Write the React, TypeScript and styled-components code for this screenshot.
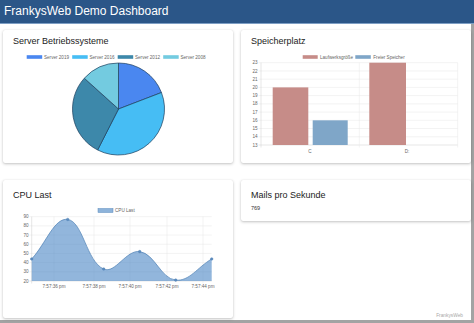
import styled, { createGlobalStyle } from "styled-components";

const GlobalStyle = createGlobalStyle`
  html, body {
    margin: 0;
    padding: 0;
    background: #fff;
  }
  body {
    font-family: "Liberation Sans", Arial, sans-serif;
  }
`;

const Page = styled.div`
  width: 474px;
  height: 323px;
  display: flex;
  flex-direction: column;
  overflow: hidden;
`;

const Header = styled.header`
  height: 23px;
  flex: none;
  background: #2b5688;
  border-bottom: 1px solid #7d9ec4;
  color: #fff;
  font-size: 12px;
  line-height: 23px;
  padding-left: 4px;
`;

const Main = styled.main`
  position: relative;
  flex: 1;
  box-sizing: border-box;
  border-right: 3px solid #a3a3a3;
  border-bottom: 3px solid #a3a3a3;
  padding: 6px 0 0 3px;
`;

const Grid = styled.div`
  display: grid;
  grid-template-columns: 230px 230px;
  grid-template-rows: 133px auto;
  column-gap: 8px;
  row-gap: 17px;
  align-items: start;
`;

const Card = styled.section<{ $top: number; $height?: number }>`
  box-sizing: border-box;
  background: #fff;
  border-radius: 2px;
  box-shadow: 0 1px 3px rgba(0, 0, 0, 0.24), 0 0 1px rgba(0, 0, 0, 0.1);
  padding-top: ${(p) => p.$top}px;
  height: ${(p) => (p.$height ? `${p.$height}px` : "auto")};
`;

const Title = styled.h2`
  margin: 0;
  padding: 0 10px;
  font-size: 9px;
  line-height: 11px;
  font-weight: normal;
  color: #222;
`;

const Value = styled.div`
  padding: 3px 10px 9px;
  font-size: 5.5px;
  line-height: 8px;
  color: #333;
`;

const Chart = styled.svg`
  display: block;
  font-family: "Liberation Sans", Arial, sans-serif;
`;

const Footer = styled.div`
  position: absolute;
  right: 8px;
  bottom: 1px;
  font-size: 4.8px;
  line-height: 6px;
  color: #a8a8a8;
`;

const TXT = "#666";
const GRID = "#e6e6e6";

const pieSlices = [
  { label: "Server 2019", color: "#4a87f0", from: 0, to: 69 },
  { label: "Server 2016", color: "#46bdf4", from: 69, to: 207 },
  { label: "Server 2012", color: "#3d88aa", from: 207, to: 312 },
  { label: "Server 2008", color: "#73cbe0", from: 312, to: 360 },
];

const slicePath = (cx: number, cy: number, r: number, a0: number, a1: number) => {
  const pt = (a: number) => {
    const rad = (a * Math.PI) / 180;
    return `${(cx + r * Math.sin(rad)).toFixed(2)} ${(cy - r * Math.cos(rad)).toFixed(2)}`;
  };
  const large = a1 - a0 > 180 ? 1 : 0;
  return `M ${cx} ${cy} L ${pt(a0)} A ${r} ${r} 0 ${large} 1 ${pt(a1)} Z`;
};

const PieChart = () => (
  <Chart width={230} height={116} viewBox="0 0 230 116">
    {pieSlices.map((s, i) => {
      const bx = 23.7 + i * 45.5;
      return (
        <g key={s.label}>
          <rect x={bx} y={8.2} width={15.5} height={3.6} fill={s.color} />
          <text x={bx + 17.3} y={11.5} fontSize={4.6} fill={TXT}>
            {s.label}
          </text>
        </g>
      );
    })}
    {pieSlices.map((s) => (
      <path
        key={s.label}
        d={slicePath(115.5, 62, 46, s.from, s.to)}
        fill={s.color}
        stroke="#1d3d5c"
        strokeWidth={0.7}
      />
    ))}
  </Chart>
);

const RED = "#c68c88";
const BLUE = "#7fa6c8";

const BarChart = () => {
  const top = 15.7;
  const step = 8.23;
  const y = (v: number) => top + (23 - v) * step;
  const ticks = [23, 22, 21, 20, 19, 18, 17, 16, 15, 14, 13];
  return (
    <Chart width={230} height={116} viewBox="0 0 230 116">
      <rect x={61.7} y={8.2} width={15} height={3.6} fill={RED} />
      <text x={79} y={11.5} fontSize={4.6} fill={TXT}>
        Laufwerksgröße
      </text>
      <rect x={114.3} y={8.2} width={15.5} height={3.6} fill={BLUE} />
      <text x={132.3} y={11.5} fontSize={4.6} fill={TXT}>
        Freier Speicher
      </text>
      {ticks.map((t) => (
        <g key={t}>
          <line x1={17.5} x2={216.7} y1={y(t)} y2={y(t)} stroke={t === 13 ? "#cfcfcf" : GRID} strokeWidth={0.5} />
          <text x={16.5} y={y(t) + 1.6} fontSize={4.6} fill={TXT} textAnchor="end">
            {t}
          </text>
        </g>
      ))}
      {[20, 118.3, 216.7].map((x) => (
        <line key={x} x1={x} x2={x} y1={top} y2={y(13) + 2.5} stroke={x === 20 ? "#cfcfcf" : GRID} strokeWidth={0.5} />
      ))}
      <rect x={31.7} y={y(20)} width={35.6} height={y(13) - y(20)} fill={RED} />
      <rect x={71.7} y={y(16)} width={35} height={y(13) - y(16)} fill={BLUE} />
      <rect x={128.3} y={y(23)} width={36.7} height={y(13) - y(23)} fill={RED} />
      <text x={69} y={105.6} fontSize={4.6} fill={TXT} textAnchor="middle">
        C
      </text>
      <text x={166} y={105.6} fontSize={4.6} fill={TXT} textAnchor="middle">
        D:
      </text>
    </Chart>
  );
};

type Pt = { x: number; y: number };

const curvePath = (pts: Pt[], tension: number) => {
  const cps = pts.map((cur, i) => {
    const prev = pts[i - 1] ?? cur;
    const next = pts[i + 1] ?? cur;
    const d01 = Math.hypot(cur.x - prev.x, cur.y - prev.y);
    const d12 = Math.hypot(next.x - cur.x, next.y - cur.y);
    const sum = d01 + d12 || 1;
    const fa = (tension * d01) / sum;
    const fb = (tension * d12) / sum;
    return {
      prev: { x: cur.x - fa * (next.x - prev.x), y: cur.y - fa * (next.y - prev.y) },
      next: { x: cur.x + fb * (next.x - prev.x), y: cur.y + fb * (next.y - prev.y) },
    };
  });
  let d = `M ${pts[0].x} ${pts[0].y}`;
  for (let i = 1; i < pts.length; i++) {
    const a = cps[i - 1].next;
    const b = cps[i].prev;
    d += ` C ${a.x.toFixed(2)} ${a.y.toFixed(2)} ${b.x.toFixed(2)} ${b.y.toFixed(2)} ${pts[i].x} ${pts[i].y}`;
  }
  return d;
};

const cpuValues = [44, 87, 33, 52, 21, 44];
const cpuLabels = ["7:57:36 pm", "7:57:38 pm", "7:57:40 pm", "7:57:42 pm", "7:57:44 pm"];
const cpuLabelX = [51, 91, 127, 164, 200];

const LineChart = () => {
  const left = 28.7;
  const right = 208.7;
  const bottom = 80;
  const unit = 0.919;
  const y = (v: number) => bottom - (v - 20) * unit;
  const pts = cpuValues.map((v, i) => ({ x: left + (i * (right - left)) / (cpuValues.length - 1), y: y(v) }));
  const line = curvePath(pts, 0.4);
  const area = `${line} L ${right} ${bottom} L ${left} ${bottom} Z`;
  const ticks = [90, 80, 70, 60, 50, 40, 30, 20];
  return (
    <Chart width={230} height={117} viewBox="0 0 230 117">
      <rect x={95} y={7.5} width={15} height={4} fill="#8db3da" stroke="#5b8bbd" strokeWidth={0.5} />
      <text x={112} y={11.3} fontSize={4.6} fill={TXT}>
        CPU Last
      </text>
      {ticks.map((t) => (
        <g key={t}>
          <line x1={left - 2.5} x2={right} y1={y(t)} y2={y(t)} stroke={t === 20 ? "#cfcfcf" : GRID} strokeWidth={0.5} />
          <text x={25.5} y={y(t) + 1.6} fontSize={4.6} fill={TXT} textAnchor="end">
            {t}
          </text>
        </g>
      ))}
      <line x1={left} x2={left} y1={y(90)} y2={bottom + 2.5} stroke="#cfcfcf" strokeWidth={0.5} />
      {cpuLabelX.map((x) => (
        <line key={x} x1={x} x2={x} y1={y(90)} y2={bottom + 2.5} stroke={GRID} strokeWidth={0.5} />
      ))}
      <path d={area} fill="rgba(74, 134, 196, 0.6)" />
      <path d={line} fill="none" stroke="#4f81b5" strokeWidth={0.7} />
      {pts.map((p, i) => (
        <circle key={i} cx={p.x} cy={p.y} r={1.3} fill="#5b8bbd" stroke="#4f81b5" strokeWidth={0.4} />
      ))}
      {cpuLabels.map((l, i) => (
        <text key={l} x={cpuLabelX[i]} y={87.4} fontSize={4.6} fill={TXT} textAnchor="middle">
          {l}
        </text>
      ))}
    </Chart>
  );
};

export default function App() {
  return (
    <Page>
      <GlobalStyle />
      <Header>FrankysWeb Demo Dashboard</Header>
      <Main>
        <Grid>
          <Card $top={6} $height={133}>
            <Title>Server Betriebssysteme</Title>
            <PieChart />
          </Card>
          <Card $top={6} $height={133}>
            <Title>Speicherplatz</Title>
            <BarChart />
          </Card>
          <Card $top={10} $height={138}>
            <Title>CPU Last</Title>
            <LineChart />
          </Card>
          <Card $top={10}>
            <Title>Mails pro Sekunde</Title>
            <Value>769</Value>
          </Card>
        </Grid>
        <Footer>FrankysWeb</Footer>
      </Main>
    </Page>
  );
}
